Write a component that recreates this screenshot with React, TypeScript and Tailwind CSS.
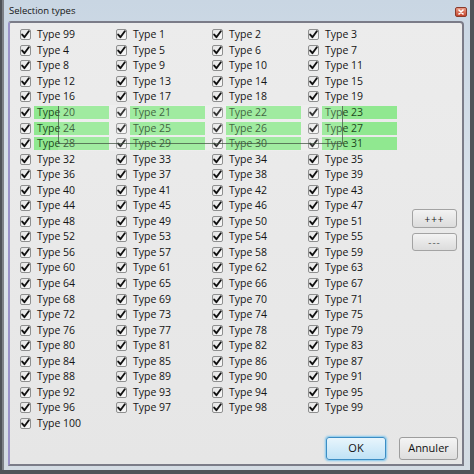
import React from "react";

const rows: number[][] = [
  [99, 1, 2, 3],
  [4, 5, 6, 7],
  [8, 9, 10, 11],
  [12, 13, 14, 15],
  [16, 17, 18, 19],
  [20, 21, 22, 23],
  [24, 25, 26, 27],
  [28, 29, 30, 31],
  [32, 33, 34, 35],
  [36, 37, 38, 39],
  [40, 41, 42, 43],
  [44, 45, 46, 47],
  [48, 49, 50, 51],
  [52, 53, 54, 55],
  [56, 57, 58, 59],
  [60, 61, 62, 63],
  [64, 65, 66, 67],
  [68, 69, 70, 71],
  [72, 73, 74, 75],
  [76, 77, 78, 79],
  [80, 81, 82, 83],
  [84, 85, 86, 87],
  [88, 89, 90, 91],
  [92, 93, 94, 95],
  [96, 97, 98, 99],
  [100],
];

function Check() {
  return (
    <div className="w-[11px] h-[11px] shrink-0 border border-[#8e8f8f] rounded-[2px] bg-gradient-to-br from-[#e4e4e4] to-[#fafafa] flex items-center justify-center">
      <svg width="9" height="9" viewBox="0 0 9 9">
        <path d="M1.2 4.6 L3.4 7.2 L7.8 1.3" fill="none" stroke="#111" strokeWidth="1.9" strokeLinejoin="round" strokeLinecap="round" />
      </svg>
    </div>
  );
}

function Cell({ n, green }: { n: number; green: boolean }) {
  return (
    <div className="flex items-center gap-[6px] h-[15.56px]">
      <Check />
      {green ? (
        <span className="-ml-[3px] pl-[3px] w-[75px] h-[13px] leading-[13px] bg-[#90e890] text-[#1e4a1e]">Type {n}</span>
      ) : (
        <span className="leading-[13px] text-[#141414]">Type {n}</span>
      )}
    </div>
  );
}

export default function App() {
  return (
    <div className="w-[474px] h-[474px] bg-[#4f5358] overflow-hidden" style={{ fontFamily: '"Open Sans", "Noto Sans", sans-serif' }}>
      <div className="w-[468px] h-[470px] ml-[2px] border-l-2 border-[#7d8187] bg-gradient-to-b from-[#c9d6e3] via-[#dbe3eb] to-[#d3dbe3] flex flex-col">
        <div className="h-[21px] flex items-center justify-between pl-[5px] pr-[3px]">
          <span className="text-[9.5px] text-[#151515] mt-[1px]">Selection types</span>
          <div className="w-[12px] h-[10px] rounded-[2px] bg-gradient-to-b from-[#e89a86] to-[#c4442c] border border-[#8a3a2a] flex items-center justify-center mt-[2px]">
            <svg width="6" height="6" viewBox="0 0 6 6">
              <path d="M1 1 L5 5 M5 1 L1 5" stroke="#fff" strokeWidth="1.6" strokeLinecap="round" />
            </svg>
          </div>
        </div>
        <div className="relative ml-[4px] w-[456px] h-[445px] border-2 border-[#7b7c88] border-l-[#9a93c8] rounded-tr-[4px] rounded-tl-[3px] bg-gradient-to-b from-[#ececec] via-[#e9e9e9] to-[#e6e6e6] flex flex-col text-[10.5px]">
          <div className="flex items-start pl-[10px] pt-[4px]">
            <div className="grid grid-cols-[96px_96px_96px_96px]">
              {rows.map((r, ri) =>
                [0, 1, 2, 3].map((ci) =>
                  r[ci] !== undefined ? (
                    <Cell key={`${ri}-${ci}`} n={r[ci]} green={ri >= 5 && ri <= 7} />
                  ) : (
                    <div key={`${ri}-${ci}`} className="h-[15.56px]" />
                  )
                )
              )}
            </div>
            <div className="flex flex-col gap-[5px] ml-[8px] mt-[182px]">
              <button className="w-[45px] h-[19px] border border-[#a3a3a3] rounded-[3px] bg-gradient-to-b from-[#f3f3f3] to-[#dcdcdc] text-[10px] tracking-[1px] leading-none text-[#222] flex items-center justify-center">+++</button>
              <button className="w-[45px] h-[18px] border border-[#a3a3a3] rounded-[3px] bg-gradient-to-b from-[#f3f3f3] to-[#dcdcdc] text-[10px] tracking-[1px] leading-none text-[#666] flex items-center justify-center">---</button>
            </div>
          </div>
          <div className="flex justify-end gap-[13px] pr-[4px] mt-[6px]">
            <button className="w-[60px] h-[23px] rounded-[3px] border border-[#3c8dc4] shadow-[0_0_2px_1px_#7fc6ee] bg-gradient-to-b from-[#e8f5fc] to-[#bfe2f6] text-[11px] text-[#111]">OK</button>
            <button className="w-[59px] h-[23px] rounded-[3px] border border-[#9d9d9d] bg-gradient-to-b from-[#f4f4f4] to-[#dedede] text-[11px] text-[#111]">Annuler</button>
          </div>
          <div className="absolute left-[48px] top-[82px] w-[285px] h-[46px] bg-white/15" />
          <div className="absolute left-[48px] top-[83px] w-[285px] h-[38px] border-l border-b border-r border-[#3a4a3a]/70" />
        </div>
      </div>
    </div>
  );
}
